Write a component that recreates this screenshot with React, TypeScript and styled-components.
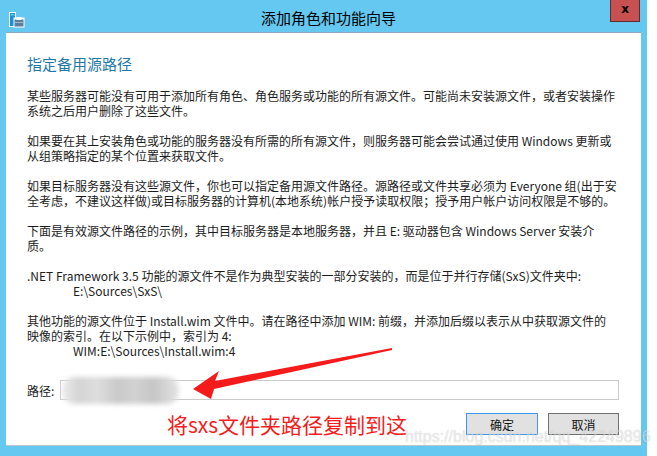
import styled, { createGlobalStyle } from "styled-components"

const GlobalStyle = createGlobalStyle`
    html, body {
        margin: 0;
        padding: 0;
        background: #ffffff;
    }
    body {
        font-family: "Noto Sans CJK SC", "Noto Sans", sans-serif;
    }
`

const paragraphs: string[][] = [
    [
        "某些服务器可能没有可用于添加所有角色、角色服务或功能的所有源文件。可能尚未安装源文件，或者安装操作",
        "系统之后用户删除了这些文件。",
    ],
    [
        "如果要在其上安装角色或功能的服务器没有所需的所有源文件，则服务器可能会尝试通过使用 Windows 更新或",
        "从组策略指定的某个位置来获取文件。",
    ],
    [
        "如果目标服务器没有这些源文件，你也可以指定备用源文件路径。源路径或文件共享必须为 Everyone 组(出于安",
        "全考虑，不建议这样做)或目标服务器的计算机(本地系统)帐户授予读取权限；授予用户帐户访问权限是不够的。",
    ],
    [
        "下面是有效源文件路径的示例，其中目标服务器是本地服务器，并且 E: 驱动器包含 Windows Server 安装介",
        "质。",
    ],
]

function WizardIcon() {
    return (
        <svg width="16" height="16" viewBox="0 0 16 16">
            <rect x="0.5" y="0.5" width="6" height="14" fill="#1d8fd8" stroke="#ffffff" />
            <rect x="1.5" y="2" width="4" height="1.5" fill="#6cc4f4" />
            <rect x="4.5" y="5.5" width="11" height="10" fill="#ffffff" />
            <rect x="5.5" y="7.5" width="9" height="7" fill="#5a7f9e" />
            <rect x="8" y="5.5" width="4" height="2" fill="none" stroke="#ffffff" />
            <rect x="5.5" y="10" width="9" height="1" fill="#9db8cc" />
        </svg>
    )
}

function PointerArrow() {
    return (
        <ArrowLayer width="657" height="456" viewBox="0 0 657 456">
            <polygon
                points="193,389 219,371 215,381 392,348 392,350 214,389 211,399"
                fill="#f51b1b"
            />
        </ArrowLayer>
    )
}

export default function App() {
    return (
        <>
            <GlobalStyle />
            <Window>
                <TitleBar>
                    <IconSlot>
                        <WizardIcon />
                    </IconSlot>
                    <Title>添加角色和功能向导</Title>
                    <CloseButton>x</CloseButton>
                </TitleBar>

                <Panel>
                    <Heading>指定备用源路径</Heading>

                    {paragraphs.map((lines, i) => (
                        <Paragraph key={i}>
                            {lines.map((line, j) => (
                                <Line key={j}>{line}</Line>
                            ))}
                        </Paragraph>
                    ))}

                    <Paragraph>
                        <Line>.NET Framework 3.5 功能的源文件不是作为典型安装的一部分安装的，而是位于并行存储(SxS)文件夹中:</Line>
                        <Line indent>E:\Sources\SxS\</Line>
                    </Paragraph>

                    <Paragraph extra>
                        <Line>其他功能的源文件位于 Install.wim 文件中。请在路径中添加 WIM: 前缀，并添加后缀以表示从中获取源文件的</Line>
                        <Line>映像的索引。在以下示例中，索引为 4:</Line>
                        <Line indent>WIM:E:\Sources\Install.wim:4</Line>
                    </Paragraph>

                    <PathRow>
                        <PathLabel>路径:</PathLabel>
                        <PathInput>
                            <Mosaic />
                        </PathInput>
                    </PathRow>

                    <FooterRow>
                        <Note>将sxs文件夹路径复制到这</Note>
                        <ButtonGroup>
                            <DialogButton primary>确定</DialogButton>
                            <DialogButton>取消</DialogButton>
                        </ButtonGroup>
                    </FooterRow>
                </Panel>

                <PointerArrow />
                <Watermark>https://blog.csdn.net/qq_42249896</Watermark>
            </Window>
        </>
    )
}

const Window = styled.div`
    position: relative;
    width: 647px;
    height: 456px;
    box-sizing: border-box;
    background: #64c8f0;
    padding-bottom: 10px;
    display: flex;
    flex-direction: column;
`
const TitleBar = styled.div`
    height: 32px;
    flex-shrink: 0;
    display: grid;
    grid-template-columns: 1fr auto 1fr;
    padding: 0 7px 0 9px;
`
const IconSlot = styled.div`
    padding-top: 9px;
`
const Title = styled.div`
    padding: 9px 0 0 8px;
    font-size: 15px;
    line-height: 18px;
    color: #000000;
`
const CloseButton = styled.div`
    justify-self: end;
    width: 30px;
    height: 22px;
    box-sizing: border-box;
    background: #c75050;
    border: 1px solid #5e2c2c;
    border-top: none;
    color: #000000;
    font-family: "DejaVu Sans", sans-serif;
    font-weight: bold;
    font-size: 12px;
    line-height: 18px;
    text-align: center;
`
const Panel = styled.div`
    flex: 1;
    margin: 0 6px;
    background: #ffffff;
    border-top: 1px solid #8ea9c0;
    border-bottom: 1px solid #b9c6cf;
    padding: 21px 22px 0 21px;
    color: #1c1c1c;
    font-size: 12px;
`
const Heading = styled.div`
    font-size: 15px;
    line-height: 20px;
    color: #1f79a6;
    margin-bottom: 14px;
`
const Paragraph = styled.div<{ extra?: boolean }>`
    margin-bottom: ${p => (p.extra ? "18px" : "15px")};
    &:last-of-type {
        margin-bottom: 0;
    }
`
const Line = styled.div<{ indent?: boolean }>`
    white-space: nowrap;
    line-height: 15px;
    padding-left: ${p => (p.indent ? "46px" : "0")};
`
const PathRow = styled.div`
    display: flex;
    align-items: center;
    gap: 6px;
    margin-top: 22px;
`
const PathLabel = styled.span`
    white-space: nowrap;
    line-height: 15px;
`
const PathInput = styled.div`
    position: relative;
    flex: 1;
    height: 20px;
    box-sizing: border-box;
    border: 1px solid #cacaca;
`
const Mosaic = styled.div`
    position: absolute;
    left: 1px;
    top: -4px;
    width: 117px;
    height: 27px;
    border-radius: 12px;
    background: linear-gradient(
        90deg,
        #ececec 0%,
        #d4d4d4 15%,
        #dedede 30%,
        #c9c9c9 48%,
        #d2d2d2 62%,
        #c6c6c6 78%,
        #e4e4e4 100%
    );
    filter: blur(2.5px);
`
const FooterRow = styled.div`
    display: flex;
    align-items: center;
    justify-content: space-between;
    margin-top: 12px;
    padding-left: 140px;
`
const Note = styled.span`
    font-size: 21px;
    line-height: 24px;
    color: #f41c1c;
    white-space: nowrap;
`
const ButtonGroup = styled.div`
    display: flex;
    gap: 10px;
`
const DialogButton = styled.button<{ primary?: boolean }>`
    width: ${p => (p.primary ? "72px" : "71px")};
    height: 22px;
    box-sizing: border-box;
    padding: 0;
    background: #e1e1e1;
    border: 1px solid ${p => (p.primary ? "#3c97f0" : "#707070")};
    font-family: "Noto Sans CJK SC", sans-serif;
    font-size: 12px;
    color: #111111;
`
const ArrowLayer = styled.svg`
    position: absolute;
    left: 0;
    top: 0;
    pointer-events: none;
`
const Watermark = styled.div`
    position: absolute;
    left: 405px;
    top: 428px;
    font-family: "Liberation Sans", Arial, sans-serif;
    font-size: 16px;
    line-height: 18px;
    white-space: nowrap;
    color: rgba(255, 255, 255, 0.55);
    text-shadow: 0 0 1px rgba(0, 0, 0, 0.22);
`
